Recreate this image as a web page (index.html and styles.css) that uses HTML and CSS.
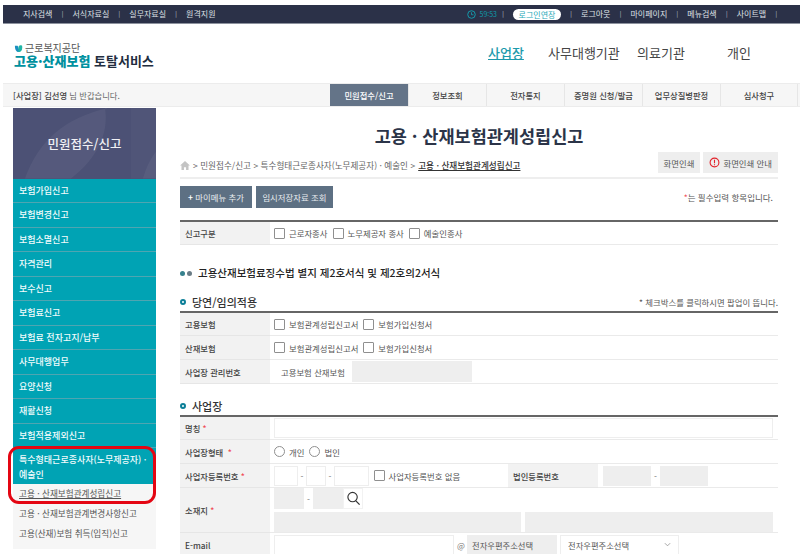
FILE: index.html
```html
<!DOCTYPE html>
<html lang="ko">
<head>
<meta charset="utf-8">
<title>고용·산재보험 토탈서비스</title>
<link rel="stylesheet" href="styles.css">
</head>
<body>
<div class="topbar">
  <div class="util">
    <span>지사검색</span><i>|</i><span>서식자료실</span><i>|</i><span>실무자료실</span><i>|</i><span>원격지원</span>
  </div>
  <div class="util">
    <svg class="clock" viewBox="0 0 10 10"><circle cx="5" cy="5" r="4.2" fill="none" stroke="#12a5b5" stroke-width="1"/><path d="M5 2.6V5.3H7.2" fill="none" stroke="#12a5b5" stroke-width=".9"/></svg>
    <span class="time">59:53</span><i>|</i><span class="pill">로그인연장</span><i>|</i><span>로그아웃</span><i>|</i><span>마이페이지</span><i>|</i><span>메뉴검색</span><i>|</i><span>사이트맵</span><i>|</i>
  </div>
</div>
<header class="head">
  <div class="logo">
    <div class="org"><svg class="mark" viewBox="0 0 10 10"><path d="M1 2C1 7 3 9 5 9S5 4 4 2Z" fill="#1b8fc0"/><path d="M5 9C9 9 9.500 5 9 2 7 1 5 1.500 5 4Z" fill="#1fb5a5"/></svg>근로복지공단</div>
    <div class="svc"><b>고용·산재보험</b> 토탈서비스</div>
  </div>
  <nav class="roles">
    <a class="role on r1">사업장</a><a class="role r2">사무대행기관</a><a class="role r3">의료기관</a><a class="role r4">개인</a>
  </nav>
</header>
<div class="gnb">
  <div class="hello"><b>[사업장] 김선영</b> 님 반갑습니다.</div>
  <div class="tabs">
    <a class="tab on">민원접수/신고</a><a class="tab">정보조회</a><a class="tab">전자통지</a><a class="tab">증명원 신청/발급</a><a class="tab">업무상질병판정</a><a class="tab">심사청구</a>
  </div>
</div>
<div class="body">
  <aside class="side">
    <div class="side-head">
      <svg class="swoosh" viewBox="0 0 143 71" preserveAspectRatio="none"><path d="M12 71C25 35 50 10 95 0H92C96 25 85 50 58 71Z" fill="#ffffff" fill-opacity=".05"/><path d="M118 0H143V71H118Z" fill="#ffffff" fill-opacity=".025"/><path d="M130 71C133 60 138 50 143 44V71Z" fill="#ffffff" fill-opacity=".05"/></svg>
      <span>민원접수/신고</span>
    </div>
    <ul class="menu">
      <li>보험가입신고</li><li>보험변경신고</li><li>보험소멸신고</li><li>자격관리</li><li>보수신고</li><li>보험료신고</li><li>보험료 전자고지/납부</li><li>사무대행업무</li><li>요양신청</li><li>재활신청</li><li>보험적용제외신고</li>
      <li class="tall">특수형태근로종사자(노무제공자) · 예술인</li>
    </ul>
    <ul class="sub">
      <li class="cur">고용 · 산재보험관계성립신고</li>
      <li>고용 · 산재보험관계변경사항신고</li>
      <li>고용(산재)보험 취득(입직)신고</li>
    </ul>
    <div class="mark-red"></div>
  </aside>
  <main class="main">
    <h1>고용 · 산재보험관계성립신고</h1>
    <div class="crumb-row">
      <div class="crumb">
        <svg class="home" viewBox="0 0 12 11"><path d="M6 0 12 5.500H10.300V11H7.300V7.500H4.700V11H1.700V5.500H0Z" fill="#c4c4c4"/></svg>
        <span>&gt; 민원접수/신고 &gt; 특수형태근로종사자(노무제공자) · 예술인 &gt;</span> <u>고용 · 산재보험관계성립신고</u>
      </div>
      <div class="print">
        <button class="gbtn">화면인쇄</button>
        <button class="gbtn"><svg class="warn" viewBox="0 0 12 12"><circle cx="6" cy="6" r="4.800" fill="none" stroke="#e2232a" stroke-width="1.200"/><path d="M6 3V6.800M6 8V9" stroke="#e2232a" stroke-width="1.200"/></svg>화면인쇄 안내</button>
      </div>
    </div>
    <div class="actions">
      <button class="sbtn"><b>+</b> 마이메뉴 추가</button>
      <button class="sbtn">임시저장자료 조회</button>
      <p class="req"><em>*</em>는 필수입력 항목입니다.</p>
    </div>
    <table class="form">
      <tr><th>신고구분</th><td><div class="line"><label><s></s>근로자종사</label><label><s></s>노무제공자 종사</label><label><s></s>예술인종사</label></div></td></tr>
    </table>
    <h2 class="dots"><span></span><span></span>고용산재보험료징수법 별지 제2호서식 및 제2호의2서식</h2>
    <div class="sec-row">
      <h3>당연/임의적용</h3>
      <p>* 체크박스를 클릭하시면 팝업이 뜹니다.</p>
    </div>
    <table class="form">
      <tr><th>고용보험</th><td><div class="line"><label><s></s>보험관계성립신고서</label><label><s></s>보험가입신청서</label></div></td></tr>
      <tr><th>산재보험</th><td><div class="line"><label><s></s>보험관계성립신고서</label><label><s></s>보험가입신청서</label></div></td></tr>
      <tr><th>사업장 관리번호</th><td><div class="line mgmt"><span>고용보험 산재보험</span><span class="fld off w120 h21"></span></div></td></tr>
    </table>
    <div class="sec-row biz"><h3>사업장</h3></div>
    <table class="form">
      <colgroup><col class="c1"><col class="c2"><col class="c3"><col></colgroup>
      <tr><th>명칭 <em>*</em></th><td colspan="3"><div class="line"><span class="fld grow h20"></span></div></td></tr>
      <tr><th>사업장형태 &nbsp;<em>*</em></th><td colspan="3"><div class="line"><label class="rd"><s></s>개인</label><label class="rd"><s></s>법인</label></div></td></tr>
      <tr><th>사업자등록번호 <em>*</em></th>
        <td><div class="line bizno"><span class="fld w24 h20"></span><i>-</i><span class="fld w20 h20"></span><i>-</i><span class="fld w35 h20"></span><label><s></s>사업자등록번호 없음</label></div></td>
        <th>법인등록번호</th>
        <td><div class="line corp"><span class="fld off w48 h20"></span><i>-</i><span class="fld off w48 h20"></span></div></td></tr>
      <tr class="addr"><th>소재지 <em>*</em></th><td colspan="3">
        <div class="line zip"><span class="fld off w30 h21"></span><i>-</i><span class="fld off w30 h21"></span><span class="find"><svg viewBox="0 0 16 16"><circle cx="7" cy="6.500" r="5" fill="none" stroke="#333" stroke-width="1.200"/><path d="M10.500 10.500 14.500 14.500" stroke="#333" stroke-width="1.400"/></svg></span></div>
        <div class="line full"><span class="fld off w247 h20"></span><span class="fld off grow h20"></span></div>
      </td></tr>
      <tr><th>E-mail</th><td colspan="3"><div class="line mail"><span class="fld w180 h20"></span><i>@</i><span class="fld off w90 h20 sel s1">전자우편주소선택</span><span class="fld w119 h20 sel">전자우편주소선택<svg viewBox="0 0 8 5"><path d="M1 1 4 4 7 1" fill="none" stroke="#999"/></svg></span></div></td></tr>
    </table>
  </main>
</div>
</body>
</html>
```
FILE: styles.css
```css
* { box-sizing: border-box; }
html, body { margin: 0; height: 554px; overflow: hidden; background: #fff; }
body { font-family: "Noto Sans CJK KR", "Noto Sans", sans-serif; color: #444; font-size: 8px; }
ul { list-style: none; margin: 0; padding: 0; }
h1, h2, h3, p { margin: 0; }
i { font-style: normal; }
button { font-family: inherit; border: 0; padding: 0; }

.topbar { margin: 5px 0 0 3px; height: 19px; background: #2b3148; border-bottom: 1px solid #8d929e; display: flex; justify-content: space-between; padding: 0 23px 0 20px; }
.util { display: flex; align-items: center; gap: 9.200px; color: #dfe1e6; font-size: 8px; line-height: 18px; }
.util i { font-size: 6px; color: #c4c7cf; }
.clock { width: 9px; height: 9px; margin-right: -6px; }
.time { color: #0e9cab; font-size: 7px; margin-right: -4px; }
.pill { background: #fff; color: #26a9b8; border-radius: 6px; height: 11px; line-height: 11px; width: 48px; text-align: center; }

.head { height: 59px; position: relative; display: flex; }
.logo { padding: 18px 0 0 14px; }
.org { font-size: 10px; line-height: 12px; color: #555; display: flex; align-items: center; gap: 2px; }
.mark { width: 9px; height: 9px; }
.svc { font-size: 13px; font-weight: 700; line-height: 16px; color: #222d3f; margin-top: -1px; }
.svc b { color: #00919f; }
.roles { position: absolute; left: 488px; top: 19px; display: flex; font-size: 13px; line-height: 20px; color: #444; }
.role { display: block; }
.role.on { color: #1d9aac; text-decoration: underline; font-weight: 500; }
.r1 { width: 60px; }
.r2 { width: 89px; }
.r3 { width: 90px; }
.r4 { width: 30px; }

.gnb { height: 24px; background: #f6f6f6; border-top: 1px solid #ececec; border-bottom: 1px solid #ececec; margin-left: 3px; display: flex; justify-content: space-between; padding: 0 2px 0 10px; align-items: stretch; }
.hello { font-size: 8.300px; line-height: 22px; color: #666; }
.hello b { font-weight: 500; color: #444; }
.tabs { display: flex; }
.tab { width: 78px; text-align: center; font-size: 8.300px; font-weight: 500; line-height: 22px; color: #444; border-left: 1px solid #e6e6e6; }
.tab:last-child { border-right: 1px solid #e6e6e6; }
.tab.on { background: #647488; color: #fff; border-left: 0; }

.body { display: flex; padding: 1px 22px 0 13px; }
.side { width: 143px; flex: none; position: relative; height: 446px; }
.side-head { height: 70.500px; background: #4c5175; position: relative; display: flex; align-items: center; justify-content: center; color: #f1f1f5; font-size: 12.500px; font-weight: 500; }
.swoosh { position: absolute; left: 0; top: 0; width: 100%; height: 100%; }
.side-head span { position: relative; }
.menu li { height: 24.500px; background: #00a3b4; border-bottom: 1px solid #4fa5b1; color: #f1fbfc; font-size: 9px; font-weight: 500; line-height: 23.500px; padding-left: 6px; word-break: keep-all; }
.menu .tall { height: 36px; line-height: 15px; padding: 4px 6px 0; border-bottom: 0; }
.sub { background: #f6f6f6; padding: 0 0 5px 6px; }
.sub li { height: 20px; line-height: 18px; font-size: 8.600px; color: #555; }
.sub .cur { text-decoration: underline; }
.mark-red { position: absolute; left: -5px; top: 337.500px; width: 148px; height: 58.500px; border: 3.500px solid #e40613; border-radius: 11px; }

.main { flex: 1; padding-left: 24px; min-width: 0; }
h1 { text-align: center; font-size: 17.500px; font-weight: 700; line-height: 24px; color: #2b3448; margin-top: 16px; }
.crumb-row { display: flex; justify-content: space-between; align-items: flex-end; height: 31px; padding-bottom: 4px; border-bottom: 2px solid #eee; }
.crumb { font-size: 8.600px; color: #666; display: flex; align-items: center; gap: 3px; line-height: 12px; padding-bottom: 2px; }
.crumb u { color: #333; font-weight: 500; }
.home { width: 10px; height: 9px; }
.print { display: flex; gap: 3px; }
.gbtn { height: 21px; background: #eee; color: #555; font-size: 8.400px; padding: 0 6px; display: flex; align-items: center; gap: 3px; }
.warn { width: 11px; height: 11px; }
.actions { display: flex; align-items: flex-start; gap: 4px; height: 41px; padding-top: 7px; }
.sbtn { height: 22px; background: #5d7083; color: #e9edf0; font-size: 8.400px; padding: 0 8px; }
.sbtn + .sbtn { padding: 0 6.500px; }
.sbtn b { color: #fff; }
.req { margin-left: auto; padding-right: 5px; font-size: 8.500px; line-height: 22px; color: #555; }
em { color: #f0515a; font-style: normal; }

.form { width: 100%; border-collapse: separate; border-spacing: 0; table-layout: fixed; border-top: 2px solid #666; }
.form th, .form td { height: 24px; }
.form tr:first-child th, .form tr:first-child td { height: 23px; }
.form th { width: 90px; background: #f2f2f2; border-bottom: 1px solid #e6e6e6; text-align: left; font-size: 8.300px; font-weight: 500; color: #444; padding: 0 0 0 5px; }
.form td { border-bottom: 1px solid #eaeaea; padding: 0 5px 0 4px; font-size: 8.400px; color: #555; }
.c1 { width: 90px; }
.c2 { width: 238px; }
.c3 { width: 90px; }
.line { display: flex; align-items: center; gap: 5px; }
label { display: flex; align-items: center; }
label s { display: block; width: 11px; height: 11px; border: 1px solid #8f8f8f; border-radius: 1px; background: #fff; margin-right: 4px; }
.rd s { border-radius: 50%; width: 11px; height: 11px; }
.fld { display: flex; align-items: center; border: 1px solid #eee; background: #fff; flex: none; }
.off { background: #eee; }
.grow { flex: 1; }
.h20 { height: 20px; }
.h21 { height: 21px; }
.w20 { width: 20px; }
.w24 { width: 24px; }
.w30 { width: 30px; }
.w35 { width: 35px; }
.w48 { width: 48px; }
.w90 { width: 90px; }
.w119 { width: 119px; }
.w120 { width: 120px; }
.w180 { width: 180px; }
.w247 { width: 247px; }
.mgmt { padding-left: 7px; }
.mgmt .off { margin-left: 2px; }

.dots { display: flex; align-items: center; font-size: 10.500px; font-weight: 500; color: #222; line-height: 16px; margin-top: 20px; }
.dots span { width: 5px; height: 5px; border-radius: 50%; background: #36818d; margin-right: 2px; }
.dots span:nth-child(2) { background: #6a7c86; margin-right: 6px; }
.sec-row { display: flex; justify-content: space-between; align-items: center; height: 16px; margin-top: 13px; margin-bottom: 1px; }
.sec-row h3 { font-size: 11px; font-weight: 500; color: #333; padding-left: 12px; position: relative; line-height: 16px; }
.sec-row h3::before { content: ""; position: absolute; left: 0; top: 5px; width: 6px; height: 6px; box-sizing: border-box; border: 2px solid #0b7f98; border-radius: 50%; }
.sec-row p { font-size: 8.400px; color: #555; }
.sec-row.biz { margin-top: 14px; }

.bizno, .corp, .zip { gap: 1.500px; }
.bizno i, .corp i, .zip i { width: 5px; text-align: center; color: #777; }
.bizno label { margin-left: 3px; }
.corp { padding-left: 1px; gap: 2px; }
.form .addr th, .form .addr td { height: 44px; }
.zip { height: 21px; gap: 2px; }
.find { width: 20px; height: 21px; border: 1px solid #f2f2f2; display: flex; align-items: center; justify-content: center; margin-left: -2px; }
.find svg { width: 15px; height: 15px; }
.full { margin-top: 3px; gap: 4px; }
.mail { gap: 3px; }
.mail i { width: 7px; text-align: center; color: #777; }
.sel { padding-left: 7px; font-size: 8.300px; color: #555; justify-content: space-between; padding-right: 7px; white-space: nowrap; }
.s1 { padding-left: 4px; }
.sel svg { width: 7px; height: 5px; }
```
